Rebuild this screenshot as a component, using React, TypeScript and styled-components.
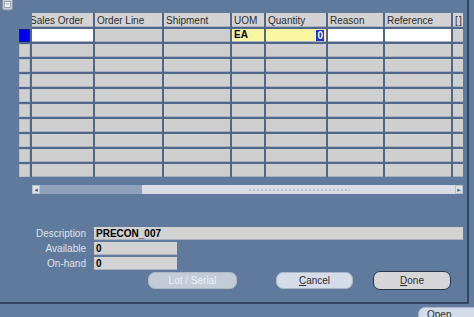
import React from "react"
import styled, { createGlobalStyle } from "styled-components"

const GlobalStyle = createGlobalStyle`
  html, body {
    margin: 0;
    padding: 0;
    background: #5f7a9c;
  }
  body {
    font-family: "Liberation Sans Narrow", "Liberation Sans", Arial, sans-serif;
  }
`

const columns = [
  { key: "so", title: "Sales Order", width: 61 },
  { key: "ol", title: "Order Line", width: 67 },
  { key: "sh", title: "Shipment", width: 66 },
  { key: "uom", title: "UOM", width: 32 },
  { key: "qty", title: "Quantity", width: 60 },
  { key: "rs", title: "Reason", width: 55 },
  { key: "ref", title: "Reference", width: 66 },
  { key: "x", title: "[ ]", width: 10 },
]

type Tone = "gray" | "white" | "yellow"

const firstRow: Record<string, Tone> = {
  so: "white",
  ol: "gray",
  sh: "gray",
  uom: "yellow",
  qty: "yellow",
  rs: "white",
  ref: "white",
  x: "gray",
}

const tones: Record<Tone, string> = {
  gray: "#cfcfcf",
  white: "#ffffff",
  yellow: "#fbf6a2",
}

const App = () => {
  const rows = Array.from({ length: 10 }, (_, i) => i)
  return (
    <Page>
      <GlobalStyle />
      <Window>
        <TopBar>
          <WinIcon viewBox="0 0 11 11">
            <rect x="0.5" y="-2" width="10" height="12" rx="2" fill="#c9ced6" stroke="#8e98a6" />
            <rect x="2.5" y="1.5" width="6" height="6" fill="#eef0f3" stroke="#8a94a2" strokeWidth="0.8" />
            <line x1="3.5" y1="4" x2="7.5" y2="4" stroke="#8a94a2" strokeWidth="0.7" />
          </WinIcon>
        </TopBar>

        <Grid $cols={columns.map((c) => c.width)}>
          <Blank />
          {columns.map((c) => (
            <HeadCell key={c.key} $clip={c.key === "so"} $tiny={c.key === "x"}>
              {c.title}
            </HeadCell>
          ))}
          {rows.map((r) => (
            <React.Fragment key={r}>
              <Selector $active={r === 0} />
              {columns.map((c) => {
                const tone: Tone = r === 0 ? firstRow[c.key] : "gray"
                return (
                  <Cell key={c.key} $tone={tone} $right={c.key === "qty"}>
                    {r === 0 && c.key === "uom" && "EA"}
                    {r === 0 && c.key === "qty" && <Selected>0</Selected>}
                  </Cell>
                )
              })}
            </React.Fragment>
          ))}
        </Grid>

        <ScrollBar>
          <ArrowBtn>◂</ArrowBtn>
          <Track />
          <Thumb>
            <Grip />
          </Thumb>
          <ArrowBtn>▸</ArrowBtn>
        </ScrollBar>

        <Form>
          <FieldRow>
            <Label>Description</Label>
            <Field $wide>PRECON_007</Field>
          </FieldRow>
          <FieldRow>
            <Label>Available</Label>
            <Field>0</Field>
          </FieldRow>
          <FieldRow>
            <Label>On-hand</Label>
            <Field>0</Field>
          </FieldRow>
        </Form>

        <Buttons>
          <Button $variant="disabled" $w={89}>
            Lot / Serial
          </Button>
          <Button $variant="normal" $w={77} style={{ marginLeft: 39 }}>
            <u>C</u>ancel
          </Button>
          <Button $variant="default" $w={78} style={{ marginLeft: 20 }}>
            <u>D</u>one
          </Button>
        </Buttons>
      </Window>
      <Footer>
        <OpenButton>Open</OpenButton>
      </Footer>
    </Page>
  )
}

const Page = styled.div`
  width: 474px;
  height: 317px;
  overflow: hidden;
  background: #627d9f;
  display: flex;
  flex-direction: column;
`

const Window = styled.div`
  width: 467px;
  height: 302px;
  flex: none;
  background: #5f7a9c;
  border-right: 2px solid #34465e;
  border-bottom: 2px solid #34465e;
  display: flex;
  flex-direction: column;
`

const TopBar = styled.div`
  height: 13px;
  padding-left: 2px;
  display: flex;
  align-items: flex-start;
`

const WinIcon = styled.svg`
  width: 11px;
  height: 11px;
`

const Grid = styled.div<{ $cols: number[] }>`
  margin-left: 19px;
  width: max-content;
  display: grid;
  grid-template-columns: 11px ${(p) => p.$cols.map((w) => `${w}px`).join(" ")};
  grid-template-rows: 14px;
  grid-auto-rows: 13px;
  column-gap: 2px;
  row-gap: 2px;
  font-size: 10px;
  background: #4f678a;
`

const Blank = styled.div`
  background: #5f7a9c;
  margin: 0 -2px -2px 0;
`

const HeadCell = styled.div<{ $clip?: boolean; $tiny?: boolean }>`
  background: #d3d3d3;
  color: #2b2b2b;
  line-height: 15px;
  padding-left: ${(p) => (p.$clip || p.$tiny ? "0" : "2px")};
  text-indent: ${(p) => (p.$clip ? "-2px" : "0")};
  text-align: ${(p) => (p.$tiny ? "center" : "left")};
  letter-spacing: ${(p) => (p.$tiny ? "-0.8px" : "0")};
  white-space: nowrap;
  overflow: hidden;
  border-bottom: 1px solid #aab3bf;
  box-sizing: border-box;
`

const Selector = styled.div<{ $active?: boolean }>`
  background: ${(p) => (p.$active ? "#0000f0" : "#cfcfcf")};
  border: 1px solid ${(p) => (p.$active ? "#1a1a8a" : "#b9bec6")};
  box-sizing: border-box;
`

const Cell = styled.div<{ $tone: Tone; $right?: boolean }>`
  background: ${(p) => tones[p.$tone]};
  border-bottom: 1px solid #a9b0ba;
  box-sizing: border-box;
  font-weight: bold;
  color: #000;
  line-height: 12px;
  padding: 0 2px;
  display: flex;
  justify-content: ${(p) => (p.$right ? "flex-end" : "flex-start")};
  align-items: center;
  overflow: hidden;
`

const Selected = styled.span`
  background: #1c2fd0;
  color: #ffffff;
  padding: 0 1px;
  line-height: 11px;
`

const ScrollBar = styled.div`
  margin: 8px 0 0 32px;
  width: 431px;
  height: 9px;
  display: flex;
`

const ArrowBtn = styled.div`
  width: 8px;
  height: 9px;
  background: #dfe3e8;
  color: #5a6676;
  font-family: "DejaVu Sans", sans-serif;
  font-size: 7px;
  line-height: 8px;
  text-align: center;
  box-sizing: border-box;
  border: 1px solid #b8c0cb;
`

const Track = styled.div`
  width: 102px;
  background: #8ea2bb;
`

const Thumb = styled.div`
  flex: 1;
  background: #d9dee5;
  display: flex;
  align-items: center;
  justify-content: center;
`

const Grip = styled.div`
  width: 102px;
  height: 4px;
  background-image: radial-gradient(circle, #b7bfca 0.9px, transparent 1.2px);
  background-size: 4px 4px;
`

const Form = styled.div`
  margin-top: 33px;
  display: flex;
  flex-direction: column;
  gap: 2px;
`

const FieldRow = styled.div`
  display: flex;
  align-items: center;
  height: 13px;
`

const Label = styled.div`
  width: 86px;
  text-align: right;
  color: #dfe5ec;
  font-size: 10px;
  padding-right: 8px;
  box-sizing: content-box;
`

const Field = styled.div<{ $wide?: boolean }>`
  width: ${(p) => (p.$wide ? "369px" : "83px")};
  height: 13px;
  background: #d2d2d2;
  border-bottom: 1px solid #aab1bb;
  box-sizing: border-box;
  font-size: 10px;
  font-weight: bold;
  line-height: 13px;
  padding-left: 2px;
  color: #000;
`

const Buttons = styled.div`
  margin-top: 1px;
  padding-left: 148px;
  display: flex;
  align-items: center;
`

const buttonLook = {
  disabled: { bg: "#c3cbd6", fg: "#eef0f3", border: "#aeb8c6" },
  normal: { bg: "#d3dce8", fg: "#2c2c2c", border: "#aab6c6" },
  default: { bg: "#d6d6d8", fg: "#2c2c2c", border: "#27364c" },
}

const Button = styled.div<{ $variant: keyof typeof buttonLook; $w: number }>`
  width: ${(p) => p.$w}px;
  height: ${(p) => (p.$variant === "default" ? 19 : 17)}px;
  box-sizing: border-box;
  border-radius: 7px;
  background: ${(p) => buttonLook[p.$variant].bg};
  color: ${(p) => buttonLook[p.$variant].fg};
  border: ${(p) => (p.$variant === "default" ? "1.5px" : "1px")} solid
    ${(p) => buttonLook[p.$variant].border};
  font-size: 10px;
  display: flex;
  align-items: center;
  justify-content: center;

  u {
    text-decoration: underline;
  }
`

const Footer = styled.div`
  flex: 1;
  padding: 3px 0 0 418px;
  display: flex;
  overflow: hidden;
`

const OpenButton = styled.div`
  flex: none;
  width: 90px;
  height: 18px;
  box-sizing: border-box;
  border-radius: 7px;
  border: 1px solid #aab6c6;
  background: #d3dce8;
  color: #2c2c2c;
  font-size: 10px;
  padding-left: 8px;
  padding-top: 1px;
`

export default App
